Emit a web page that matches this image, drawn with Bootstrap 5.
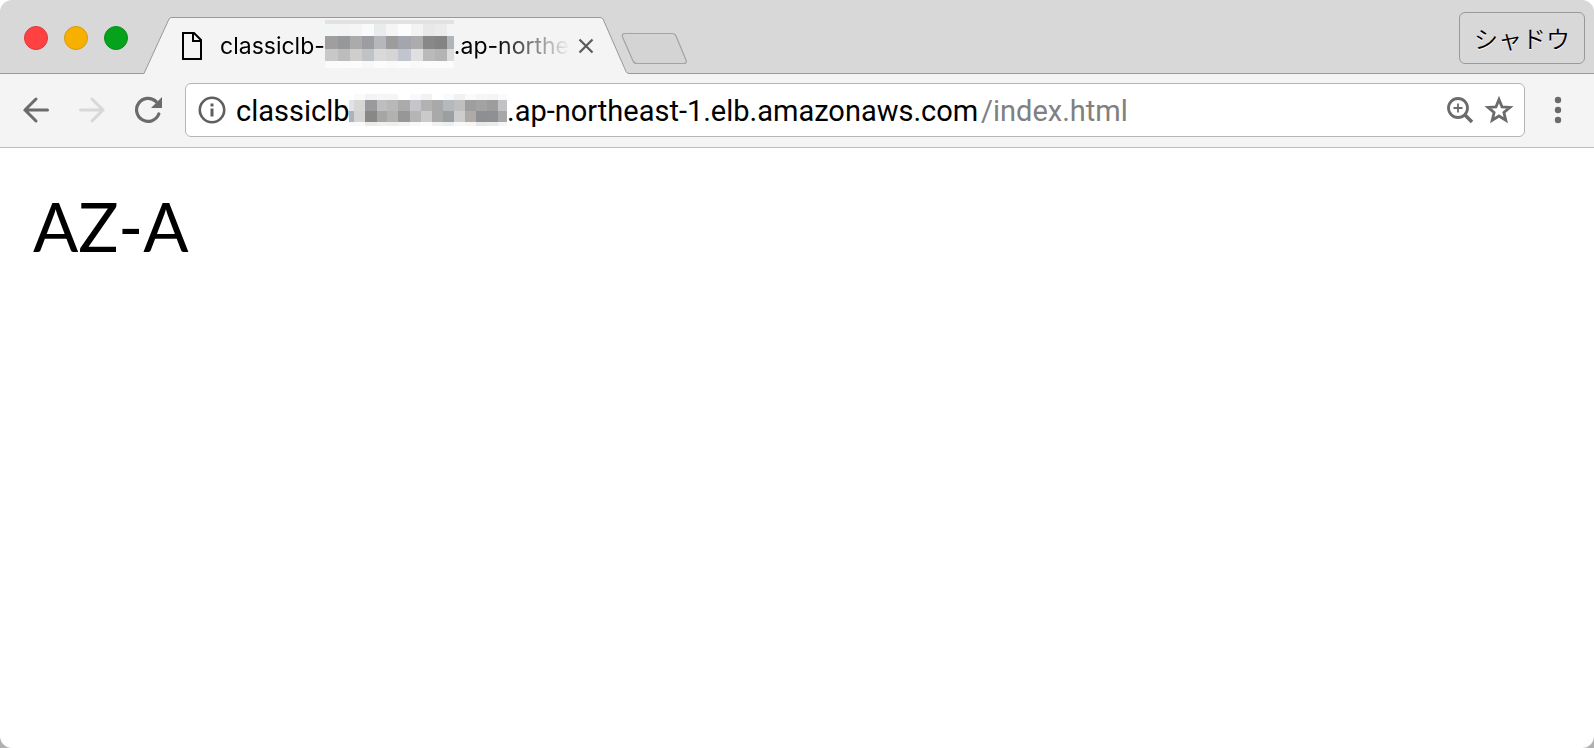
<!DOCTYPE html>
<html lang="ja">
<head>
<meta charset="utf-8">
<meta name="viewport" content="width=device-width, initial-scale=1">
<title>classiclb</title>
<link href="https://cdn.jsdelivr.net/npm/bootstrap@5.3.0/dist/css/bootstrap.min.css" rel="stylesheet">
<style>
  body { background: linear-gradient(#fff 50%, #b0b0b0 50%); font-family: Inter, "Noto Sans CJK JP", sans-serif; color: #000; }
  .window { border-radius: 12px; background: #fff; }
  .titlebar { height: 74px; background: #d8d8d8; border-bottom: 1px solid #999; padding-right: 9px; }
  .lights { gap: 16px; padding: 26px 16px 0 24px; }
  .light { width: 24px; height: 24px; border-radius: 50%; border: 1px solid; padding: 0; }
  .light-close { background: #ff4141; border-color: #dc3838; }
  .light-min { background: #f7b000; border-color: #d59a08; }
  .light-zoom { background: #06a21c; border-color: #088d1b; }
  .browser-tab { width: 485px; height: 58px; margin: 16px 0 -1px; padding: 0 33px 0 38px; }
  .tab-shape { position: absolute; inset: 0; }
  .tab-label { font-size: 23px; line-height: 30px; margin-left: 18px; width: 350px; height: 50px; position: relative;
    -webkit-mask-image: linear-gradient(90deg, #000 276px, transparent 350px); mask-image: linear-gradient(90deg, #000 276px, transparent 350px); }
  .tab-label span { padding-top: 2px; }
  .tab-label svg { margin-top: -4px; }
  .tab-close { margin-left: 8px; padding-top: 2px !important; }
  .plain { border: 0; background: none; padding: 0; display: flex; color: inherit; }
  .new-tab { margin: 32px 0 0 -8px; }
  .profile { width: 126px; height: 52px; margin-top: 12px; border: 1px solid #999; border-radius: 6px; background: transparent; padding: 0; font: 350 24px/48px "Noto Sans CJK JP", sans-serif; color: #000; text-shadow: 0 1px 0 #fff; }
  .toolbar { height: 74px; background: #f4f4f4; border-bottom: 1px solid #bdbdbd; padding: 0 24px 2px 20px; color: #666; }
  .nav-buttons { gap: 28px; width: 165px; }
  .omnibox { height: 54px; border: 1px solid #b5b5b5; border-radius: 6px; background: #fff; padding: 0 10px 0 12px; margin-right: 25px; }
  .omnibox input { border: 0; padding: 3px 0 0; background: none; font-family: Roboto, sans-serif; font-size: 29px; line-height: 36px; height: 40px; outline: 0; color: #000; min-width: 0; }
  .omnibox .host-name { width: 113px; margin-left: 10px; }
  .omnibox .host-domain { width: 474px; }
  .omnibox .url-path { color: #808080; }
  .page-title { font: 400 67px/80px Lato, sans-serif; margin: 0; padding: 38px 33px; }
</style>
</head>
<body class="min-vh-100 d-flex flex-column">
<div class="window flex-grow-1 d-flex flex-column overflow-hidden">
  <header class="titlebar d-flex align-items-start">
    <div class="lights d-flex">
      <button class="light light-close" aria-label="Close window"></button>
      <button class="light light-min" aria-label="Minimize window"></button>
      <button class="light light-zoom" aria-label="Zoom window"></button>
    </div>
    <div class="browser-tab position-relative d-flex align-items-center">
      <svg class="tab-shape" width="485" height="58" viewBox="0 0 485 58" aria-hidden="true"><path d="M0 57.5 25 3Q26 1.500 28 1.500H456Q458 1.500 459 3L482 55.500Q483 57.500 485 57.500V58H0Z" fill="#f4f4f4"/><path d="M0 57.500 25 3Q26 1.500 28 1.500H456Q458 1.500 459 3L482 55.500Q483 57.500 485 57.500" fill="none" stroke="#999"/></svg>
      <svg class="position-relative flex-shrink-0" width="20" height="30" viewBox="0 -2 20 30" fill="none" stroke="#000" stroke-width="2" aria-hidden="true"><path d="M1 1H12L19 8V27H1ZM11 1V9H19"/></svg>
      <div class="tab-label d-flex align-items-center text-nowrap"><span>classiclb-</span><svg class="flex-shrink-0" id="tabMosaic" width="129" height="49" shape-rendering="crispEdges" aria-hidden="true"></svg><span>.ap-northe</span></div>
      <button class="plain tab-close position-relative" aria-label="Close tab"><svg width="16" height="16" viewBox="0 0 16 16" stroke="#5a5a5a" stroke-width="2.200"><path d="M1.500 1.500 14.500 14.500M14.500 1.500 1.500 14.500"/></svg></button>
    </div>
    <button class="plain new-tab" aria-label="New tab"><svg width="68" height="33" viewBox="0 0 68 33" fill="#d4d4d4" stroke="#a3a3a3" stroke-width="1.200"><path d="M4 1.500H51Q54 1.500 55 4L65 28Q66 31.500 63 31.500H16Q13 31.500 12 29L1.500 5Q.5 1.500 4 1.500Z"/></svg></button>
    <button class="profile ms-auto">シャドウ</button>
  </header>
  <div class="toolbar d-flex align-items-center">
    <div class="nav-buttons d-flex align-items-center flex-shrink-0">
      <button class="plain" aria-label="Back"><svg width="30" height="28" viewBox="0 0 30 28" fill="none" stroke="#6b6b6b" stroke-width="3" stroke-linecap="round"><path d="M27.500 14H5M16 3 5 14 16 25"/></svg></button>
      <button class="plain" aria-label="Forward" disabled><svg width="28" height="28" viewBox="0 0 28 28" fill="none" stroke="#d8d8d8" stroke-width="3" stroke-linecap="round"><path d="M2.500 14H25M14 3 25 14 14 25"/></svg></button>
      <button class="plain" aria-label="Reload"><svg width="30" height="28" viewBox="0 0 30 28"><path d="M22 5.500A11.500 11.500 0 1 0 24.800 18" fill="none" stroke="#6b6b6b" stroke-width="3.200" stroke-linecap="round"/><path d="M28 1V12H17Z" fill="#6b6b6b"/></svg></button>
    </div>
    <div class="omnibox flex-grow-1 d-flex align-items-center" role="group" aria-label="Address">
      <button class="plain flex-shrink-0" aria-label="Site information"><svg width="28" height="28" viewBox="0 0 28 28" fill="none" stroke="#5f5f5f"><circle cx="14" cy="14" r="12.200" stroke-width="2.600"/><path d="M14 12.500V20.500M14 7.500V10.500" stroke-width="3"/></svg></button>
      <input class="host-name flex-shrink-0" type="text" value="classiclb" aria-label="Host name">
      <svg class="flex-shrink-0" id="urlMosaic" width="158" height="32" shape-rendering="crispEdges" aria-hidden="true"></svg>
      <input class="host-domain flex-shrink-0" type="text" value=".ap-northeast-1.elb.amazonaws.com" aria-label="Domain">
      <input class="url-path flex-grow-1" type="text" value="/index.html" aria-label="Path">
      <button class="plain me-2 flex-shrink-0" aria-label="Zoom"><svg width="32" height="28" viewBox="0 0 32 28" fill="none" stroke="#6b6b6b"><circle cx="14" cy="12" r="9.500" stroke-width="2.800"/><path d="M14 7.500V16.500M9.500 12H18.500" stroke-width="1.800"/><path d="M20.500 18.500 28 26" stroke-width="3.600"/></svg></button>
      <button class="plain flex-shrink-0" aria-label="Bookmark"><svg width="30" height="30" viewBox="0 0 30 30" fill="none" stroke="#6b6b6b" stroke-width="2.800"><path d="M15 4.500 18 11.800 26 12.400 19.900 17.500 21.800 25.200 15 21 8.200 25.200 10.100 17.500 4 12.400 12 11.800Z"/></svg></button>
    </div>
    <button class="plain me-2 ms-1" aria-label="Menu"><svg width="8" height="28" viewBox="0 0 8 28" fill="#6b6b6b"><circle cx="4" cy="4" r="3.200"/><circle cx="4" cy="14" r="3.200"/><circle cx="4" cy="24" r="3.200"/></svg></button>
  </div>
  <main class="flex-grow-1"><h1 class="page-title">AZ-A</h1></main>
</div>
<script>
  // Fills an svg with rows of coloured tiles; xs and ys are the tile edges.
  function mosaic(id, xs, ys, rows) {
    const svg = document.getElementById(id);
    rows.forEach((row, r) => row.split(' ').forEach((c, i) => {
      const el = document.createElementNS('http://www.w3.org/2000/svg', 'rect');
      el.setAttribute('x', xs[i]); el.setAttribute('y', ys[r]);
      el.setAttribute('width', xs[i + 1] - xs[i]); el.setAttribute('height', ys[r + 1] - ys[r]);
      el.setAttribute('fill', '#' + c);
      svg.append(el);
    }));
  }
  mosaic('tabMosaic', [0,13,25,37,49,61,73,86,98,110,122,129], [0,5,17,30,42,49], [
    'e2e2e2 e2e2e2 e2e2e2 e2e2e2 e2e2e2 e2e2e2 e2e2e2 e2e2e2 e2e2e2 e2e2e2 e2e2e2',
    'f2f5f5 f3f3f3 f5f5f5 fafafa e9ecec f5f5f5 fcfcfc f3f3f3 e8e8e8 ebebeb f3f5f5',
    'a09f9d 97989c ababab 9c9da1 b5b7ba 9c9c9c a4a6ae adabad 888888 848484 b0b4b7',
    'c8c8c8 bcbcbc cfcecc bec3c6 d9d9d9 d5d5d5 c2c4ce e0e0e0 bababa b4b4b4 dcdcdc',
    'fafcfc fafcfc fcfcfc f8f8f8 fcfcfc fafafa fcfcfc f8fafa fafcfc fafcfc fafcfc']);
  mosaic('urlMosaic', [0,5,16,28,38,49,61,72,83,94,105,116,127,138,149,158], [0,6,17,28,32], [
    'ffffff fafafa f3f3f3 f6f6f6 f5f5f5 ffffff f9f9f9 f2f2f2 ffffff fafafa f1f1f1 fafafa f6f6f6 f5f5f5 fafafa',
    'e0e4ea d8d7d6 9a9a9c bebebe b8b8b8 ababab c4c6c9 b2b2b2 a9a9a9 b3b9bc bfbfbf 9e9e9e a3a3a3 9d9d9d c2c2c4',
    'adb3bb d4d4d2 8a8886 a6a6a4 b2b2b0 979795 b5b5b5 cacaca a9a9a9 9a9fa2 cdcdcd aeaaa8 8e8f93 8e9092 a6a8a8',
    'f8f8f8 fafafa ebebeb f0f0f0 eeeeee f3f3f3 f8f8f8 fcfcfc f1f1f1 eeeeee f8f8f8 f6f6f6 e8e8e8 ebebeb f5f5f5']);
</script>
<script src="https://cdn.jsdelivr.net/npm/bootstrap@5.3.0/dist/js/bootstrap.bundle.min.js"></script>
</body>
</html>
